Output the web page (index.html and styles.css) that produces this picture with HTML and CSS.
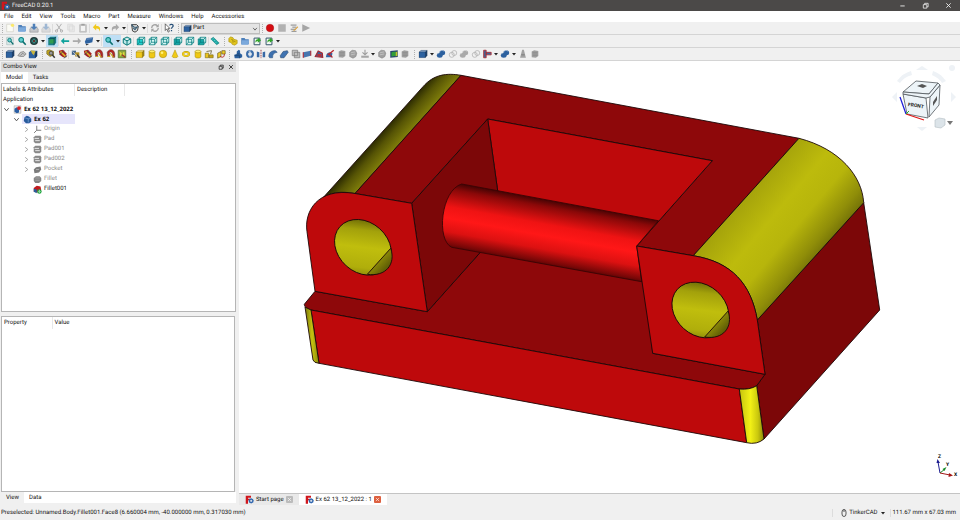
FILE: index.html
```html
<!DOCTYPE html>
<html lang="en">
<head>
<meta charset="utf-8">
<title>FreeCAD 0.20.1</title>
<link rel="stylesheet" href="styles.css">
</head>
<body>
<svg class="defs" aria-hidden="true">
  <symbol id="logo" viewBox="0 0 12 12"><path d="M1 1h7v2.500H4V5h3v2H4v4.500H1z" fill="#d0161c"/><circle cx="8.200" cy="7.800" r="2.400" fill="none" stroke="#2f66ae" stroke-width="1.700"/><path d="M8.200 4.200v7.200M4.600 7.800h7.200M5.700 5.300l5 5M10.700 5.300l-5 5" stroke="#2f66ae" stroke-width=".8"/><circle cx="8.200" cy="7.800" r="1.200" fill="#eee"/></symbol>
  <symbol id="new" viewBox="0 0 12 12"><path d="M2 1.500h8v9H2z" fill="#fbfbf5" stroke="#c9c9c0" stroke-width=".7"/><circle cx="9" cy="2.800" r="2" fill="#fbe96b"/></symbol>
  <symbol id="folder" viewBox="0 0 12 12"><path d="M1.500 2.500h4l1 1.500h4v6h-9z" fill="#4d80bb"/><path d="M2.500 5h8.500l-1 5.500H1.500z" fill="#7ba9dc"/></symbol>
  <symbol id="save" viewBox="0 0 12 12"><path d="M1 7.500L2.500 5h7L11 7.500V11H1z" fill="#c4c6c9" stroke="#888" stroke-width=".6"/><path d="M4.500 1h3v3.500H10L6 8.500 2 4.500h2.500z" fill="#4e7fb8"/></symbol>
  <symbol id="cut" viewBox="0 0 12 12"><path d="M3 1l5.500 8M9 1L3.500 9" stroke="#b0b0b0" stroke-width="1.200"/><circle cx="3" cy="9.500" r="1.400" fill="none" stroke="#a5a5a5"/><circle cx="9" cy="9.500" r="1.400" fill="none" stroke="#a5a5a5"/></symbol>
  <symbol id="copy" viewBox="0 0 12 12"><path d="M2 1.500h6v7H2zM4 3.500h6v7H4z" fill="#eaeaea" stroke="#d8d8d8" stroke-width=".8"/></symbol>
  <symbol id="paste" viewBox="0 0 12 12"><path d="M2 2h8v9H2z" fill="#c8c8c8" stroke="#b0b0b0" stroke-width=".7"/><path d="M3.500 3.500h5v6h-5z" fill="#f4f4f4"/><path d="M4 1h4v2H4z" fill="#a0a0a0"/></symbol>
  <symbol id="undo" viewBox="0 0 12 12"><path d="M5 1v2.500c4 0 6 2 4 7 .2-3-1-4-4-4V9L1 5z" fill="currentColor"/></symbol>
  <symbol id="refreshdoc" viewBox="0 0 12 12"><path d="M2 2h6l2 2-1 5-3 2-3-1.500z" fill="#e4e4e2" stroke="#444" stroke-width="1.200"/><path d="M2 1.500C3 5 6 6 9.500 4.500M4 6l2 2 3-4" fill="none" stroke="#365a72" stroke-width="1.300"/></symbol>
  <symbol id="refresh" viewBox="0 0 12 12"><path d="M2 6a4 4 0 0 1 7-2.500M10 6a4 4 0 0 1-7 2.500" fill="none" stroke="#a2a2a2" stroke-width="1.600"/><path d="M10.500 1v4H7zM1.500 11V7H5z" fill="#a2a2a2"/></symbol>
  <symbol id="whats" viewBox="0 0 12 12"><path d="M1.500 1v8l2-2 1.500 4 1.500-1L5 6.500h2z" fill="#fff" stroke="#333" stroke-width=".8"/><path d="M7 3c0-2 4-2 4 .3C11 5 9 5 9 7M9 8.500v1.500" fill="none" stroke="#274f78" stroke-width="1.500"/></symbol>
  <symbol id="record" viewBox="0 0 12 12"><circle cx="6" cy="6" r="4.500" fill="#d40d12" stroke="#a00a0c" stroke-width=".5"/></symbol>
  <symbol id="stop" viewBox="0 0 12 12"><path d="M1.500 1.500h9v9h-9z" fill="#b2b2b2"/></symbol>
  <symbol id="macros" viewBox="0 0 12 12"><path d="M2 2h7v9H2z" fill="#eee"/><path d="M2 2.500h7M4 5h5M2 7.500h6M3 10h6" stroke="#777"/><path d="M10.500 4L6 8l-1 2 2-1 4-4z" fill="#dda23a"/></symbol>
  <symbol id="play" viewBox="0 0 12 12"><path d="M1.500 1.500l9.500 4.500-9.500 4.500z" fill="#a6a6a6"/></symbol>
  <symbol id="fitall" viewBox="0 0 12 12"><path d="M2 1.500h8v9H2z" fill="#d9e8e8" stroke="#9cb5b5" stroke-width=".6"/><circle cx="5.500" cy="5" r="2.200" fill="#6cd0d0" stroke="#0a7272"/><path d="M7 6.500l3 3.500" stroke="#0a6c6c" stroke-width="1.600"/></symbol>
  <symbol id="fit" viewBox="0 0 12 12"><circle cx="5" cy="4.500" r="2.800" fill="#62cccd" stroke="#0b8383" stroke-width="1.300"/><path d="M7 6.800l3.500 3.700" stroke="#0b6f6f" stroke-width="1.900"/></symbol>
  <symbol id="style" viewBox="0 0 12 12"><circle cx="6" cy="6" r="4.800" fill="#223b3b"/><circle cx="6" cy="6" r="3" fill="#2c8d87"/><circle cx="6" cy="6" r="1.500" fill="#b8322e"/><path d="M2.500 2.500l7 7M9.500 2.500l-7 7" stroke="#233" stroke-width=".7"/></symbol>
  <symbol id="bbox" viewBox="0 0 12 12"><path d="M1.500 3l2.500-2h7v7L8.500 11h-7z" fill="#1b7f86"/><path d="M3 5l2-1h4v4l-1 1H3z" fill="#2f9c50"/><path d="M1.500 3h7v8M8.500 3L11 1" fill="none" stroke="#0a3f50" stroke-width=".8"/></symbol>
  <symbol id="left" viewBox="0 0 12 12"><path d="M1 6l4-4v3h6v2.200H5V10z" fill="currentColor"/></symbol>
  <symbol id="right" viewBox="0 0 12 12"><path d="M11 6L7 2v3H1v2.200h6V10z" fill="currentColor"/></symbol>
  <symbol id="cube" viewBox="0 0 12 12"><path d="M1.200 3.600l2.500-2H11v6.200L8.800 10.400H1.200z" fill="currentColor"/><path d="M1.200 3.600l2.500-2H11L8.800 3.600z" fill="#fff" opacity=".35"/><path d="M8.800 3.600L11 1.600v6.200l-2.200 2.600z" opacity=".3"/><path d="M1.200 3.600l2.500-2H11v6.200L8.800 10.400H1.200zM1.200 3.600h7.600v6.800M8.800 3.600L11 1.600" fill="none" stroke="#000" stroke-opacity=".4" stroke-width=".5"/></symbol>
  <symbol id="slant" viewBox="0 0 12 12"><path d="M1 7L3 2.500l8-1-1 6-8 2z" fill="currentColor"/><path d="M2 9.500h4L3 11.500z" fill="#333"/><path d="M3 2.500l8-1-2 2.500-6 1z" fill="#fff" opacity=".2"/></symbol>
  <symbol id="import" viewBox="0 0 12 12"><path d="M1 4l2.500-2H11v6.500L8.500 11H1z" fill="#2d619f"/><path d="M8.500 4L11 2v6.500L8.500 11z" fill="#18395f"/><path d="M3 1.500l6 1-2 5-2-2z" fill="#c9b53c"/></symbol>
  <symbol id="iso" viewBox="0 0 12 12"><path d="M6 1.200l4.500 2.300v5L6 11 1.500 8.500v-5zM1.500 3.500L6 5.800l4.500-2.300M6 5.800V11" fill="#bfe9e8" stroke="#087a7b" stroke-width="1.200"/></symbol>
  <symbol id="vcube" viewBox="0 0 12 12"><path d="M1.500 4L4 1.500h6.500v6L8 10.500H1.500z" fill="#c9f3f1"/><path d="M1.500 4H8v6.500H1.500z" fill="currentColor"/><path d="M1.500 4L4 1.500h6.500v6L8 10.500H1.500zM1.500 4H8v6.500M8 4l2.500-2.500M4 1.500v6H10.500M4 7.500l-2.500 3" fill="none" stroke="#067c7d" stroke-width=".9"/></symbol>
  <symbol id="measure" viewBox="0 0 12 12"><path d="M1 3.500L4 1.500l7 7-3 2z" fill="#1ba8a5" stroke="#0c7674" stroke-width=".6"/><path d="M3 4l1-1M5 6l1-1M7 8l1-1" stroke="#d7ffff" stroke-width=".6"/></symbol>
  <symbol id="partgroup" viewBox="0 0 12 12"><path d="M3 1l3 1 1 2 4 1v4l-3 2-3-1-1-2-3-1V3z" fill="#e2c51c" stroke="#a68d0b" stroke-width=".7"/><path d="M4 4l2 1v3M7 6l2 1" stroke="#8c7609" stroke-width=".8" fill="none"/></symbol>
  <symbol id="link" viewBox="0 0 12 12"><path d="M2.500 2.500h7v8h-7z" fill="#f6faf6" stroke="#35566b" stroke-width="1.200"/><path d="M4 8c0-3 1-4 3-4V2l4 3-4 3V6C6 6 5 7 4 8z" fill="#31a52b"/></symbol>
  <symbol id="cloud" viewBox="0 0 12 12"><path d="M1 8l3-4 4-1 3 3-3 3H4z" fill="#c2c2c2" stroke="#777" stroke-width=".8"/><path d="M4 8l3-3 2 2" fill="none" stroke="#777" stroke-width=".8"/></symbol>
  <symbol id="lensy" viewBox="0 0 12 12"><path d="M1 2l3-1 5 2v4L5 9 1 6z" fill="#c7aa20" stroke="#5f530f" stroke-width=".7"/><circle cx="6" cy="5" r="2.300" fill="#999" stroke="#444"/><path d="M7.500 7l3 3.500" stroke="#383838" stroke-width="1.800"/></symbol>
  <symbol id="measred" viewBox="0 0 12 12"><path d="M1 2l5-1 4 4v5H6L2 7z" fill="#a52222"/><path d="M3 3l6 6" stroke="#ddb929" stroke-width="2"/><path d="M2 7l5-5M7 11l4-3" stroke="#344a57"/></symbol>
  <symbol id="cube2" viewBox="0 0 12 12"><path d="M1 2h5v5H1z" fill="#42658b"/><path d="M5 4h5v5H5z" fill="#b08e25"/><path d="M7 7l3.500 3.500" stroke="#333" stroke-width="2"/><path d="M2 3l6 6" stroke="#ddd"/></symbol>
  <symbol id="magnet" viewBox="0 0 12 12"><path d="M2 9L1.500 4C4-1 10 0 10.500 6v4H8V6C7 3 4 3 4 5.500L4.500 9z" fill="#b52622" stroke="#57201e" stroke-width=".6"/><path d="M5 5l4 5M2 9h3" stroke="#c9aa23" stroke-width="1.300"/></symbol>
  <symbol id="greenbox" viewBox="0 0 12 12"><path d="M1.500 1.500h9v9h-9z" fill="#8aa63a" stroke="#5c7533"/><path d="M3 3l3 2-2 4zM7 4h2v4H7z" fill="#e3d83b"/><path d="M6 7l4 3" stroke="#a43126" stroke-width="1.500"/></symbol>
  <symbol id="cyl" viewBox="0 0 12 12"><path d="M2.500 3v6c0 2.500 7 2.500 7 0V3z" fill="#f0c914" stroke="#9b820c" stroke-width=".6"/><ellipse cx="6" cy="3" rx="3.500" ry="1.600" fill="#fff06c" stroke="#9b820c" stroke-width=".6"/></symbol>
  <symbol id="sphere" viewBox="0 0 12 12"><circle cx="6" cy="6" r="4.500" fill="#ecc411" stroke="#9b820c" stroke-width=".6"/><circle cx="4.800" cy="4.500" r="1.600" fill="#fff178"/></symbol>
  <symbol id="cone" viewBox="0 0 12 12"><path d="M6 1l3.500 8c0 2-7 2-7 0z" fill="#f0ca16" stroke="#9b820c" stroke-width=".5"/></symbol>
  <symbol id="torus" viewBox="0 0 12 12"><ellipse cx="6" cy="6" rx="3.600" ry="2.300" fill="none" stroke="#a58a0c" stroke-width="2.400"/><ellipse cx="6" cy="6" rx="3.600" ry="2.300" fill="none" stroke="#f3d01d" stroke-width="1.700"/></symbol>
  <symbol id="prims" viewBox="0 0 12 12"><path d="M1.500 5h4v5.500h-4z" fill="#ecc51d" stroke="#796510" stroke-width=".7"/><path d="M6 7h5v3.500H6z" fill="#c9a610" stroke="#796510" stroke-width=".7"/><path d="M3 3l6-1-1 4" fill="none" stroke="#6a6237"/></symbol>
  <symbol id="builder" viewBox="0 0 12 12"><path d="M2 5l4-2v6l-4 2zM7 2h4v4H7z" fill="#efcb26" stroke="#695917" stroke-width=".8"/><path d="M5 9c4 2 5 0 5-3" fill="none" stroke="#b42824" stroke-width="1.200"/></symbol>
  <symbol id="extrude" viewBox="0 0 12 12"><path d="M1.500 7l3-1V3L7 1l1.500 1v3L11 7v3L8 11H2z" fill="currentColor"/><path d="M2 8h6v3M4.500 6H8" stroke="#123358" stroke-width=".7" fill="none"/></symbol>
  <symbol id="revolve" viewBox="0 0 12 12"><circle cx="6" cy="6" r="3.500" fill="none" stroke="#3b6ca8" stroke-width="2.500"/><path d="M4 2l3 3M6 1v10" stroke="#c5d6e8"/></symbol>
  <symbol id="mirror" viewBox="0 0 12 12"><path d="M1 10V3l3 1v6zM11 10V3L8 4v6z" fill="#3768a5"/><path d="M6 1v10" stroke="#8e2932" stroke-dasharray="2 1"/></symbol>
  <symbol id="fillet" viewBox="0 0 12 12"><path d="M1 9c0-5 3-7 8-7l2 2C7 4.500 5.500 6 5.500 10.500H2z" fill="#3d70ae" stroke="#234c7d" stroke-width=".7"/></symbol>
  <symbol id="chamfer" viewBox="0 0 12 12"><path d="M1.500 8L5 3l5-1 1 2-5 6.500H2z" fill="#3f73b2" stroke="#23456d" stroke-width=".7"/></symbol>
  <symbol id="greysq" viewBox="0 0 12 12"><path d="M1.500 1.500H8V8H1.500zM4 4h6.500v6.500H4z" fill="#bfbfbf" stroke="#7d7d7d" stroke-width=".9"/></symbol>
  <symbol id="ruled" viewBox="0 0 12 12"><path d="M1.500 4L10.500 2v6l-9 2.500z" fill="#4877b0"/><path d="M1.500 4v6.500M10.500 2v6" stroke="#b12631" stroke-width="1.300"/></symbol>
  <symbol id="loft" viewBox="0 0 12 12"><path d="M1.500 9L5 2.500l5 2.500.5 5z" fill="#3a629a" stroke="#a42630" stroke-width="1.300"/><path d="M4 6h5v3H4z" fill="#bb2d35"/></symbol>
  <symbol id="sweep" viewBox="0 0 12 12"><path d="M1 10l1-4 3-2 4 1-1 5z" fill="#3468a6"/><path d="M5 6l5.500-4.500M3 6c3 0 4 3 6 4" fill="none" stroke="#bb252b" stroke-width="1.600"/></symbol>
  <symbol id="grey" viewBox="0 0 12 12"><path d="M2 3l3-1.500 5 1v6L7 10.500 2 10z" fill="#a2a2a2"/><path d="M3 4h6M3 6h6M3 8h6" stroke="#858585" stroke-width=".8"/></symbol>
  <symbol id="greyball" viewBox="0 0 12 12"><path d="M2 4l3-2.500 4 .5 1.500 3-1 4L6 11 2 9z" fill="#a0a0a0" stroke="#858585" stroke-width=".7"/><path d="M3.500 4.500l5-1M3.500 7l5-1" stroke="#c4c4c4"/></symbol>
  <symbol id="greyoff" viewBox="0 0 12 12"><path d="M6 1v6M3 4l3 3 3-3" fill="none" stroke="#999" stroke-width="1.300"/><path d="M1.500 8h9v2.500h-9z" fill="#a5a5a5"/></symbol>
  <symbol id="thick" viewBox="0 0 12 12"><path d="M1.500 2.500l9-1v8l-9 1z" fill="#28456d"/><path d="M3 4l5-1v5l-5 1z" fill="#2f9e38"/><path d="M8 4l2-1v5l-2 1z" fill="#bac929"/></symbol>
  <symbol id="union" viewBox="0 0 12 12"><ellipse cx="7.500" cy="4.500" rx="3.500" ry="3" fill="currentColor"/><ellipse cx="4.500" cy="7.500" rx="3.500" ry="3" fill="currentColor"/><path d="M2 6.500C3 4 5 5 5 3s3-2 4 0" fill="none" stroke="#fff" stroke-opacity=".4"/></symbol>
  <symbol id="sect" viewBox="0 0 12 12"><circle cx="7.500" cy="4.800" r="3" fill="#eee" stroke="#a8a8a8" stroke-width=".8"/><circle cx="4.500" cy="7" r="3" fill="none" stroke="#a8a8a8" stroke-width=".8"/></symbol>
  <symbol id="join" viewBox="0 0 12 12"><path d="M2 1.500h3v9H2zM5 4h6v3H5z" fill="#3f6799" stroke="#b1262e" stroke-width="1"/></symbol>
  <symbol id="greycone" viewBox="0 0 12 12"><path d="M5 1h2l2.500 9.500h-7z" fill="#a2a2a2"/><path d="M4 7h4" stroke="#777"/></symbol>
  <symbol id="origin" viewBox="0 0 12 12"><path d="M5 1v6L1.500 10.500M5 7h6" fill="none" stroke="#777" stroke-width="1.300"/></symbol>
  <symbol id="doc" viewBox="0 0 12 12"><path d="M1.500 1h9v10h-9z" fill="#e7e7e7" stroke="#999" stroke-width=".6"/><path d="M2 5l3-2 3 2v5L5 11 2 9z" fill="#2b5fa4"/><circle cx="8" cy="4" r="2.500" fill="#d21e26"/></symbol>
  <symbol id="body" viewBox="0 0 12 12"><path d="M2 3l3-2 3 1 3 3v4l-3 2H4L1 8z" fill="#285b9c"/><path d="M3 4l4 1v5M7 5l3-1" stroke="#82add8" fill="none" stroke-width=".9"/></symbol>
  <symbol id="pad" viewBox="0 0 12 12"><path d="M1 3l2-2h7l1 2v6L9 11H3L1 9z" fill="#898989"/><path d="M2 4.500h6M3 7.500h6" stroke="#e8e8e8" stroke-width="1.300"/></symbol>
  <symbol id="pocket" viewBox="0 0 12 12"><path d="M1 6l3-3 6-1 1 4-3 4-6 1z" fill="#7c7c7c"/><path d="M4 6h4" stroke="#bbb"/></symbol>
  <symbol id="round" viewBox="0 0 12 12"><path d="M1 4l3-2.500h5L11 4v4L8 10.500H3L1 8z" fill="#858585"/><path d="M3 4h6M3 7h6" stroke="#aaa"/></symbol>
  <symbol id="tip" viewBox="0 0 12 12"><path d="M1 4l4-3 5 1 1 5-5 3-5-1z" fill="#c01a1e"/><path d="M1 5l4 1v5L1 9z" fill="#275e9d"/><circle cx="8.500" cy="8.500" r="3" fill="#20a640"/><path d="M8.500 6.500v3M7 8.500l1.500 1.500L10 8.500" stroke="#fff" fill="none" stroke-width=".8"/></symbol>
  <symbol id="caret" viewBox="0 0 6 12"><path d="M1 5h4L3 7.500z" fill="#222"/></symbol>
  <symbol id="open" viewBox="0 0 8 8"><path d="M1.500 2.500L4 5.500l2.500-3" fill="none" stroke="#444"/></symbol>
  <symbol id="closed" viewBox="0 0 8 8"><path d="M2.500 1.500L5.500 4l-3 2.500" fill="none" stroke="#999"/></symbol>
  <symbol id="x" viewBox="0 0 8 8"><path d="M1.500 1.500l5 5M6.500 1.500l-5 5" stroke="currentColor"/></symbol>
  <symbol id="restore" viewBox="0 0 8 8"><path d="M1.500 3h4v4h-4zM3 3V1.500h4v4H5.500" fill="none" stroke="currentColor" stroke-width=".9"/></symbol>
</svg>

<header class="titlebar">
  <svg class="icon"><use href="#logo"/></svg><h1>FreeCAD 0.20.1</h1>
  <div class="window-buttons">
    <button aria-label="Minimize"><svg viewBox="0 0 8 8"><path d="M1.500 4.500h5" stroke="currentColor"/></svg></button>
    <button aria-label="Restore"><svg><use href="#restore"/></svg></button>
    <button aria-label="Close"><svg><use href="#x"/></svg></button>
  </div>
</header>
<nav class="menubar">
  <button>File</button><button>Edit</button><button>View</button><button>Tools</button><button>Macro</button><button>Part</button><button>Measure</button><button>Windows</button><button>Help</button><button>Accessories</button>
</nav>

<div class="toolbar">
  <i class="grip"></i>
  <div class="group">
    <button class="tool" aria-label="New"><svg><use href="#new"/></svg></button>
    <button class="tool" aria-label="Open"><svg><use href="#folder"/></svg></button>
    <button class="tool" aria-label="Save"><svg><use href="#save"/></svg></button>
    <button class="tool faded" aria-label="Save all"><svg><use href="#save"/></svg></button>
  </div>
  <i class="sep thin"></i>
  <div class="group">
    <button class="tool" aria-label="Cut"><svg><use href="#cut"/></svg></button>
    <button class="tool" aria-label="Copy"><svg><use href="#copy"/></svg></button>
    <button class="tool" aria-label="Paste"><svg><use href="#paste"/></svg></button>
  </div>
  <i class="sep"></i>
  <div class="group">
    <button class="tool yellow" aria-label="Undo"><svg><use href="#undo"/></svg></button>
    <button class="drop" aria-label="Undo list"><svg><use href="#caret"/></svg></button>
    <button class="tool silver flip" aria-label="Redo"><svg><use href="#undo"/></svg></button>
    <button class="drop" aria-label="Redo list"><svg><use href="#caret"/></svg></button>
  </div>
  <i class="sep"></i>
  <div class="group">
    <button class="tool" aria-label="Link actions"><svg><use href="#refreshdoc"/></svg></button>
    <button class="drop" aria-label="Link list"><svg><use href="#caret"/></svg></button>
  </div>
  <i class="sep"></i>
  <button class="tool" aria-label="Refresh"><svg><use href="#refresh"/></svg></button>
  <i class="sep"></i>
  <button class="tool" aria-label="What's this"><svg><use href="#whats"/></svg></button>
  <i class="grip wide"></i>
  <div class="workbench">
    <svg class="icon blue"><use href="#cube"/></svg>
    <select aria-label="Workbench"><option>Part</option></select>
    <svg class="chevron"><use href="#open"/></svg>
  </div>
  <i class="grip"></i>
  <div class="group">
    <button class="tool" aria-label="Record macro"><svg><use href="#record"/></svg></button>
    <button class="tool" aria-label="Stop macro"><svg><use href="#stop"/></svg></button>
    <button class="tool" aria-label="Macros"><svg><use href="#macros"/></svg></button>
    <button class="tool" aria-label="Execute macro"><svg><use href="#play"/></svg></button>
  </div>
</div>

<div class="toolbar">
  <i class="grip"></i>
  <div class="group">
    <button class="tool" aria-label="Fit all"><svg><use href="#fitall"/></svg></button>
    <button class="tool" aria-label="Fit selection"><svg><use href="#fit"/></svg></button>
    <button class="tool" aria-label="Draw style"><svg><use href="#style"/></svg></button>
    <button class="drop" aria-label="Draw styles"><svg><use href="#caret"/></svg></button>
    <button class="tool active" aria-label="Bounding box"><svg><use href="#bbox"/></svg></button>
  </div>
  <i class="sep thin"></i>
  <div class="group">
    <button class="tool teal" aria-label="Back"><svg><use href="#left"/></svg></button>
    <button class="tool silver" aria-label="Forward"><svg><use href="#right"/></svg></button>
    <button class="tool blue" aria-label="Linked object"><svg><use href="#slant"/></svg></button>
    <button class="drop" aria-label="Linked objects"><svg><use href="#caret"/></svg></button>
  </div>
  <i class="sep"></i>
  <div class="group">
    <button class="tool active" aria-label="Zoom"><svg><use href="#fit"/></svg></button>
    <button class="drop active" aria-label="Zoom options"><svg><use href="#caret"/></svg></button>
    <button class="tool" aria-label="Isometric"><svg><use href="#iso"/></svg></button>
  </div>
  <i class="sep"></i>
  <div class="group cyan">
    <button class="tool" aria-label="Front"><svg><use href="#vcube"/></svg></button>
    <button class="tool pale" aria-label="Top"><svg><use href="#vcube"/></svg></button>
    <button class="tool pale" aria-label="Right"><svg><use href="#vcube"/></svg></button>
  </div>
  <i class="sep thin"></i>
  <div class="group cyan">
    <button class="tool deep" aria-label="Rear"><svg><use href="#vcube"/></svg></button>
    <button class="tool pale" aria-label="Bottom"><svg><use href="#vcube"/></svg></button>
    <button class="tool deep" aria-label="Left"><svg><use href="#vcube"/></svg></button>
  </div>
  <i class="sep thin"></i>
  <button class="tool" aria-label="Measure distance"><svg><use href="#measure"/></svg></button>
  <i class="grip wide"></i>
  <div class="group">
    <button class="tool" aria-label="Create part"><svg><use href="#partgroup"/></svg></button>
    <button class="tool" aria-label="Create group"><svg><use href="#folder"/></svg></button>
    <button class="tool" aria-label="Make link"><svg><use href="#link"/></svg></button>
    <button class="tool" aria-label="Make sub-link"><svg><use href="#link"/></svg></button>
    <button class="drop" aria-label="Link options"><svg><use href="#caret"/></svg></button>
  </div>
</div>

<div class="toolbar">
  <i class="grip"></i>
  <div class="group dense">
    <button class="tool blue" aria-label="Shape"><svg><use href="#cube"/></svg></button>
    <button class="tool" aria-label="Sketch"><svg><use href="#cloud"/></svg></button>
    <button class="tool" aria-label="Import"><svg><use href="#import"/></svg></button>
  </div>
  <i class="grip wide"></i>
  <div class="group dense">
    <button class="tool" aria-label="Measure linear"><svg><use href="#lensy"/></svg></button>
    <button class="tool" aria-label="Measure angular"><svg><use href="#measred"/></svg></button>
  </div>
  <i class="sep"></i>
  <div class="group dense">
    <button class="tool" aria-label="Measure refresh"><svg><use href="#cube2"/></svg></button>
    <button class="tool" aria-label="Clear measures"><svg><use href="#measred"/></svg></button>
    <button class="tool" aria-label="Toggle all"><svg><use href="#magnet"/></svg></button>
    <button class="tool" aria-label="Toggle 3D"><svg><use href="#magnet"/></svg></button>
    <button class="tool" aria-label="Toggle delta"><svg><use href="#greenbox"/></svg></button>
  </div>
  <i class="grip wide"></i>
  <div class="group dense">
    <button class="tool yellow" aria-label="Box"><svg><use href="#cube"/></svg></button>
    <button class="tool" aria-label="Cylinder"><svg><use href="#cyl"/></svg></button>
    <button class="tool" aria-label="Sphere"><svg><use href="#sphere"/></svg></button>
    <button class="tool" aria-label="Cone"><svg><use href="#cone"/></svg></button>
    <button class="tool" aria-label="Torus"><svg><use href="#torus"/></svg></button>
    <button class="tool" aria-label="Tube"><svg><use href="#cyl"/></svg></button>
    <button class="tool" aria-label="Primitives"><svg><use href="#prims"/></svg></button>
    <button class="tool" aria-label="Shape builder"><svg><use href="#builder"/></svg></button>
  </div>
  <i class="grip wide"></i>
  <div class="group dense">
    <button class="tool blue" aria-label="Extrude"><svg><use href="#extrude"/></svg></button>
    <button class="tool" aria-label="Revolve"><svg><use href="#revolve"/></svg></button>
    <button class="tool" aria-label="Mirror"><svg><use href="#mirror"/></svg></button>
    <button class="tool" aria-label="Fillet"><svg><use href="#fillet"/></svg></button>
    <button class="tool" aria-label="Chamfer"><svg><use href="#chamfer"/></svg></button>
    <button class="tool" aria-label="Make face"><svg><use href="#greysq"/></svg></button>
    <button class="tool" aria-label="Ruled surface"><svg><use href="#ruled"/></svg></button>
    <button class="tool" aria-label="Loft"><svg><use href="#loft"/></svg></button>
    <button class="tool" aria-label="Sweep"><svg><use href="#sweep"/></svg></button>
    <button class="tool" aria-label="Section"><svg><use href="#grey"/></svg></button>
    <button class="tool" aria-label="Cross-sections"><svg><use href="#greyball"/></svg></button>
    <button class="tool" aria-label="Offset"><svg><use href="#greyoff"/></svg></button>
  </div>
  <button class="drop" aria-label="Offsets"><svg><use href="#caret"/></svg></button>
  <div class="group dense">
    <button class="tool" aria-label="Thickness"><svg><use href="#greyball"/></svg></button>
    <button class="tool" aria-label="Projection"><svg><use href="#thick"/></svg></button>
    <button class="tool" aria-label="Color per face"><svg><use href="#grey"/></svg></button>
  </div>
  <i class="grip wide"></i>
  <button class="tool blue" aria-label="Compound"><svg><use href="#cube"/></svg></button>
  <button class="drop" aria-label="Compounds"><svg><use href="#caret"/></svg></button>
  <div class="group dense">
    <button class="tool blue" aria-label="Boolean"><svg><use href="#union"/></svg></button>
    <button class="tool" aria-label="Cut shapes"><svg><use href="#sect"/></svg></button>
    <button class="tool silver" aria-label="Union"><svg><use href="#union"/></svg></button>
    <button class="tool" aria-label="Intersection"><svg><use href="#sect"/></svg></button>
  </div>
  <button class="tool" aria-label="Join"><svg><use href="#join"/></svg></button>
  <button class="drop" aria-label="Join options"><svg><use href="#caret"/></svg></button>
  <button class="tool blue" aria-label="Split"><svg><use href="#union"/></svg></button>
  <button class="drop" aria-label="Split options"><svg><use href="#caret"/></svg></button>
  <div class="group dense">
    <button class="tool" aria-label="Check geometry"><svg><use href="#greycone"/></svg></button>
    <button class="tool" aria-label="Defeaturing"><svg><use href="#grey"/></svg></button>
  </div>
</div>

<main class="workspace">
  <aside class="dock">
    <div class="dock-title"><h2>Combo View</h2>
      <button aria-label="Float"><svg><use href="#restore"/></svg></button>
      <button aria-label="Close panel"><svg><use href="#x"/></svg></button>
    </div>
    <div class="tabs top"><button class="tab current">Model</button><button class="tab">Tasks</button></div>
    <section class="tree">
      <div class="tree-head"><span>Labels &amp; Attributes</span><span>Description</span></div>
      <p>Application</p>
      <ul>
        <li><div class="node strong"><svg class="fold"><use href="#open"/></svg><svg class="icon"><use href="#doc"/></svg><span>Ex 62 13_12_2022</span></div>
          <ul>
            <li><div class="node strong"><svg class="fold"><use href="#open"/></svg><div class="picked"><svg class="icon"><use href="#body"/></svg><span>Ex 62</span></div></div>
              <ul>
                <li><div class="node hidden"><svg class="fold"><use href="#closed"/></svg><svg class="icon"><use href="#origin"/></svg><span>Origin</span></div></li>
                <li><div class="node hidden"><svg class="fold"><use href="#closed"/></svg><svg class="icon"><use href="#pad"/></svg><span>Pad</span></div></li>
                <li><div class="node hidden"><svg class="fold"><use href="#closed"/></svg><svg class="icon"><use href="#pad"/></svg><span>Pad001</span></div></li>
                <li><div class="node hidden"><svg class="fold"><use href="#closed"/></svg><svg class="icon"><use href="#pad"/></svg><span>Pad002</span></div></li>
                <li><div class="node hidden"><svg class="fold"><use href="#closed"/></svg><svg class="icon"><use href="#pocket"/></svg><span>Pocket</span></div></li>
                <li><div class="node hidden"><svg class="fold"></svg><svg class="icon"><use href="#round"/></svg><span>Fillet</span></div></li>
                <li><div class="node"><svg class="fold"></svg><svg class="icon"><use href="#tip"/></svg><span>Fillet001</span></div></li>
              </ul>
            </li>
          </ul>
        </li>
      </ul>
    </section>
    <section class="props">
      <table><thead><tr><th>Property</th><th>Value</th></tr></thead></table>
    </section>
    <div class="tabs bottom"><button class="tab">View</button><button class="tab current">Data</button></div>
  </aside>

  <section class="documents">
    <div class="viewport">
      <svg class="model" viewBox="239 61 721 432" role="img" aria-label="Ex 62 solid">
        <defs>
          <linearGradient id="rod" gradientUnits="userSpaceOnUse" x1="560" y1="201" x2="548" y2="267"><stop offset="0" stop-color="#3a0303"/><stop offset=".12" stop-color="#8a0808"/><stop offset=".38" stop-color="#ef1313"/><stop offset=".55" stop-color="#ff1717"/><stop offset=".75" stop-color="#dc1111"/><stop offset=".93" stop-color="#7a0707"/><stop offset="1" stop-color="#430404"/></linearGradient>
          <linearGradient id="roundL" gradientUnits="userSpaceOnUse" x1="373" y1="137" x2="402" y2="163"><stop offset="0" stop-color="#1c1b01"/><stop offset=".3" stop-color="#565405"/><stop offset=".6" stop-color="#7d7b0a"/><stop offset="1" stop-color="#8a880c"/></linearGradient>
          <linearGradient id="roundR" gradientUnits="userSpaceOnUse" x1="738" y1="206" x2="812" y2="268"><stop offset="0" stop-color="#a5a30b"/><stop offset=".35" stop-color="#bdbb0c"/><stop offset=".6" stop-color="#b7b50b"/><stop offset=".85" stop-color="#908e09"/><stop offset="1" stop-color="#706e07"/></linearGradient>
          <linearGradient id="bore" x1=".15" y1=".1" x2=".85" y2=".9"><stop offset="0" stop-color="#6a6806"/><stop offset=".2" stop-color="#a3a10b"/><stop offset=".5" stop-color="#c0be0d"/><stop offset=".85" stop-color="#b0ae0b"/><stop offset="1" stop-color="#8d8b09"/></linearGradient>
          <linearGradient id="boreLow" x1=".3" y1=".3" x2=".9" y2=".9"><stop offset="0" stop-color="#a4a20a"/><stop offset="1" stop-color="#4b4904"/></linearGradient>
          <linearGradient id="edgeL" x1="0" x2="1"><stop offset="0" stop-color="#77750a"/><stop offset=".5" stop-color="#c5c310"/><stop offset="1" stop-color="#8b890a"/></linearGradient>
          <linearGradient id="edgeR" x1="0" x2="1"><stop offset="0" stop-color="#c5c30e"/><stop offset=".45" stop-color="#f2f016"/><stop offset=".75" stop-color="#cac80e"/><stop offset="1" stop-color="#8b890a"/></linearGradient>
        </defs>
        <g stroke="#1c0808" stroke-width=".9" stroke-linejoin="round">
          <path fill="#7c0708" d="M863.700 202.700L879.700 310 764 439 756.700 385.700 765 374.300 757.300 320z"/>
          <path fill="url(#roundL)" d="M461 75.300C447 73 434 74 423 86.700L321 200C329 192 341 191 355 193.500z"/>
          <path fill="#8e080a" d="M461 75.300L799 138.300 693.300 255.700 636.700 246 712.300 160.700 487.700 119 411.700 203.300 355 193.500z"/>
          <path fill="#be090b" d="M487.700 119L712.300 160.700 636.700 246 560 240 497.700 191z"/>
          <path fill="#8e080a" d="M427.300 311.700L480 252.700 520 220 645 262 652.700 353.300 765 374.300 756.700 385.700Q750 390 739.300 389L311 310Q305 309 304.300 304.300L315 291.300z"/>
          <path fill="#7c0708" d="M487.700 119L411.700 203.300 427.300 311.700 480 252.700 510 222 497.700 191z"/>
          <path fill="url(#rod)" stroke="#3a0505" d="M461.700 184L658.300 220.700 636.700 246 641.700 281.700 451.700 247.300C436 240 441 190 461.700 184z"/>
          <path fill="#be090b" d="M355 193.500L411.700 203.300 427.300 311.700 315 291.300 307 231.700C304 212 317 187 355 193.500z"/>
          <path fill="url(#roundR)" d="M799 138.300C840 149 862 176 863.700 202.700L757.300 320C751 284 732 262 693.300 255.700z"/>
          <path fill="#be090b" d="M636.700 246L693.300 255.700C732 262 751 284 757.300 320L765 374.300 652.700 353.300z"/>
          <path fill="#be090b" d="M311 310L739.300 389 746.700 442.700 319 363.300z"/>
          <path fill="url(#edgeL)" d="M305 307L311 310 319 363.300Q314 363 313 360z"/>
          <path fill="url(#edgeR)" d="M739.300 389Q750 390 756.700 385.700L764 439Q757 445 746.700 442.700z"/>
          <ellipse cx="363" cy="247.300" rx="31" ry="25" transform="rotate(42 363 247.300)" fill="url(#bore)"/>
          <path fill="url(#boreLow)" d="M367.300 274.300L390.700 248.300C396 264 386 277 367.300 274.300z"/>
          <ellipse cx="700.400" cy="310" rx="31" ry="25" transform="rotate(42 700.400 310)" fill="url(#bore)"/>
          <path fill="url(#boreLow)" d="M704.700 337L728.100 311C733.400 327 723.400 340 704.700 337z"/>
        </g>
      </svg>
      <svg class="navcube" viewBox="0 0 68 68" aria-label="Navigation cube">
        <g fill="#eef2f6"><path d="M32 2l6 4H26zM2 33l5-5v10zM66 33l-5-5v10zM32 67l5-4H27zM7 17q6-8 14-10l1 4q-8 2-12 8zM56 17Q50 9 43 7l-1 4q7 3 10 8z"/><circle cx="62" cy="4" r="3"/></g>
        <g fill="#edf4f8" stroke="#50575c" stroke-width=".8" stroke-linejoin="round"><path d="M13 28L26 17l22 2-9 11zM13 30l23 4 2 20-21-4zM40 33l10-12-1 20-10 12z"/><path d="M13 28v2l23 4 4-1 10-12-2-2-9 11z"/></g>
        <path d="M27 22l5-2 5 2-4 2z" fill="#555"/><path d="M43 38l4-6v4l-4 6z" fill="#555"/>
        <text x="18" y="43" transform="rotate(9 25 41)">FRONT</text>
        <path d="M10 33l6 17" stroke="#1919d8" stroke-width="1.200"/><path d="M16 50l18 6" stroke="#e01616" stroke-width="1.200"/><path d="M16 50l3-3" stroke="#27b927"/>
        <path d="M45 56l4-2 6 1v6l-4 3-6-1z" fill="#dce4e9" stroke="#b4bdc2" stroke-width=".6"/><path d="M57 57h6l-3 4z" fill="#777"/>
      </svg>
      <svg class="axes" viewBox="0 0 24 24" aria-label="Axes">
        <path d="M6 19L4 8" stroke="#1d1d91"/><path d="M2.500 9l1-4 2.500 4z" fill="#1d1d91"/>
        <path d="M6 19l5-4" stroke="#178a28"/><path d="M8.500 15l4-2-2 4z" fill="#178a28"/>
        <path d="M6 19l10 2" stroke="#a31818"/><path d="M15 19l4 2.500-4.500 1.500z" fill="#a31818"/>
        <text x="4" y="4">Z</text><text x="12" y="12">Y</text><text x="20" y="22">X</text>
      </svg>
    </div>
    <div class="doc-tabs">
      <div class="doc-tab"><svg class="icon"><use href="#logo"/></svg><button>Start page</button><button class="close" aria-label="Close start page"><svg><use href="#x"/></svg></button></div>
      <div class="doc-tab current"><svg class="icon"><use href="#logo"/></svg><button>Ex 62 13_12_2022 : 1</button><button class="close" aria-label="Close document"><svg><use href="#x"/></svg></button></div>
    </div>
  </section>
</main>
<footer class="statusbar">
  <p>Preselected: Unnamed.Body.Fillet001.Face8 (6.660004 mm, -40.000000 mm, 0.317030 mm)</p>
  <button class="nav-style"><svg class="mouse" viewBox="0 0 6 8"><path d="M1 3q0-2.500 2-2.500T5 3v2q0 2.500-2 2.500T1 5zM3 .5V3" fill="none" stroke="#333" stroke-width=".8"/></svg>TinkerCAD<svg class="caret" viewBox="0 0 6 8"><path d="M1 3h4L3 5.500z" fill="#222"/></svg></button>
  <output>111.67 mm x 67.03 mm</output>
</footer>
</body>
</html>
```
FILE: styles.css
```css
* { box-sizing: border-box; }
body {
  margin: 0;
  min-height: 100vh;
  display: flex;
  flex-direction: column;
  background: #f0f0f0;
  color: #111;
  font: 6px/8px Roboto, "Liberation Sans", sans-serif;
  text-rendering: geometricPrecision;
}
button, select, table { font: inherit; color: inherit; text-rendering: inherit; }
button { border: 0; padding: 0; margin: 0; background: none; }
svg { display: block; flex: none; }
h1, h2, p, ul { margin: 0; padding: 0; font: inherit; list-style: none; }
.defs { position: absolute; width: 0; height: 0; }
.icon { width: 9px; height: 9px; }

.blue { color: #2d619f; }
.yellow { color: #f0c81b; }
.silver { color: #aaa; }
.teal { color: #0fa29c; }

/* Title and menu */
.titlebar { display: flex; align-items: center; gap: 2px; height: 11px; padding-left: 1px; background: #4b4948; color: #f2f2f2; }
.window-buttons { display: flex; margin-left: auto; }
.window-buttons button { width: 23px; display: flex; justify-content: center; }
.window-buttons svg { width: 7px; height: 7px; }
.menubar { display: flex; gap: 8px; height: 11px; padding: 0 4px; background: #fff; }

/* Toolbars */
.toolbar { display: flex; align-items: center; height: 13px; border-bottom: 1px solid #d4d4d4; }
.group { display: flex; }
.tool { width: 12px; height: 12px; display: flex; align-items: center; justify-content: center; }
.tool svg { width: 10px; height: 10px; }
.dense .tool:nth-child(even) { width: 11px; }
.drop { width: 6px; height: 12px; }
.drop svg { width: 6px; height: 12px; }
.active { background: #bfdff5; }
.faded { opacity: .5; }
.flip svg { transform: scaleX(-1); }
.cyan { color: #21d4d2; }
.pale { color: #d5f5f3; }
.deep { color: #15a7a7; }
.sep { width: 2px; height: 9px; border-left: 1px solid #dcdcdc; }
.thin { width: 1px; }
.grip { width: 4px; height: 9px; display: flex; justify-content: center; }
.grip::before { content: ""; border-left: 1px dotted #b0b0b0; }
.wide { width: 6px; }
.workbench { position: relative; width: 79px; height: 11px; }
.workbench select { appearance: none; width: 100%; height: 100%; padding: 0 10px 0 11px; border: 1px solid #bdbdbd; border-radius: 0; background: #e4e4e4; }
.workbench .icon { position: absolute; left: 2px; top: 1px; }
.chevron { position: absolute; right: 2px; top: 3px; width: 6px; height: 6px; pointer-events: none; }

/* Combo view */
.workspace { flex: 1; display: flex; }
.dock { width: 239px; padding: 1px 3px 3px 1px; display: flex; flex-direction: column; }
.dock-title { display: flex; align-items: center; gap: 4px; height: 10px; padding: 0 2px; background: #dadada; }
.dock-title h2 { flex: 1; }
.dock-title svg { width: 6px; height: 6px; }
.tabs { display: flex; }
.top { height: 11px; }
.bottom { height: 11px; background: #fff; }
.tab { padding: 0 5px; background: #f0f0f0; }
.tab.current { background: #fff; }
.tree, .props { background: #fff; border: 1px solid #b5b5b5; }
.tree { flex: 229 1 0; }
.props { flex: 176 1 0; margin: 4px 1px 0 0; }
.tree-head { display: flex; height: 12px; line-height: 12px; }
.tree-head span { width: 50px; border-right: 1px solid #e8e8e8; padding-left: 2px; }
.tree-head span:first-child { width: 73px; padding-left: 1px; }
.tree p { padding-left: 1px; height: 8px; }
.tree li li { padding-left: 10px; }
.node { display: flex; align-items: center; gap: 2px; height: 10px; padding-left: 1px; }
.fold { width: 7px; height: 7px; }
.node .icon { margin-left: 1px; }
.strong { font-family: "Open Sans", "Noto Sans", sans-serif; font-weight: 700; }
.hidden { color: #8b8b8b; }
.picked { display: flex; align-items: center; gap: 2px; width: 53px; height: 10px; background: #e6e5fb; }
.props table { border-collapse: collapse; }
.props th { width: 50px; height: 12px; padding: 0 2px; font-weight: 400; text-align: left; border-right: 1px solid #e8e8e8; }
.props th:last-child { border: 0; }

/* Documents */
.documents { flex: 1; display: flex; flex-direction: column; }
.viewport { position: relative; flex: 1; background: #fff; }
.model { width: 100%; aspect-ratio: 721 / 432; }
.navcube { position: absolute; top: 3px; right: 2px; width: 68px; height: 68px; }
.navcube text { font-size: 5px; font-weight: 700; fill: #222; }
.axes { position: absolute; right: 2px; bottom: 15px; width: 24px; height: 24px; }
.axes text { font-size: 5px; font-weight: 700; }
.doc-tabs { display: flex; align-items: flex-start; height: 13px; border-top: 1px solid #c4c4c4; }
.doc-tab { display: flex; align-items: center; gap: 2px; height: 11px; padding: 0 6px; background: #e9e9e9; }
.doc-tab.current { background: #fff; }
.close { width: 7px; height: 7px; padding: 1px; background: #bbb; color: #fff; border-radius: 1px; }
.close svg { width: 5px; height: 5px; }
.current .close { background: #dd6040; }

/* Status */
.statusbar { display: flex; align-items: center; height: 14px; padding: 0 4px 0 1px; }
.statusbar p { flex: 1; }
.nav-style { display: flex; align-items: center; gap: 2px; padding: 0 4px 0 8px; border: solid #dcdcdc; border-width: 0 1px; }
.mouse { width: 6px; height: 8px; }
.caret { width: 6px; height: 8px; }
.statusbar output { padding-left: 2px; }
```
